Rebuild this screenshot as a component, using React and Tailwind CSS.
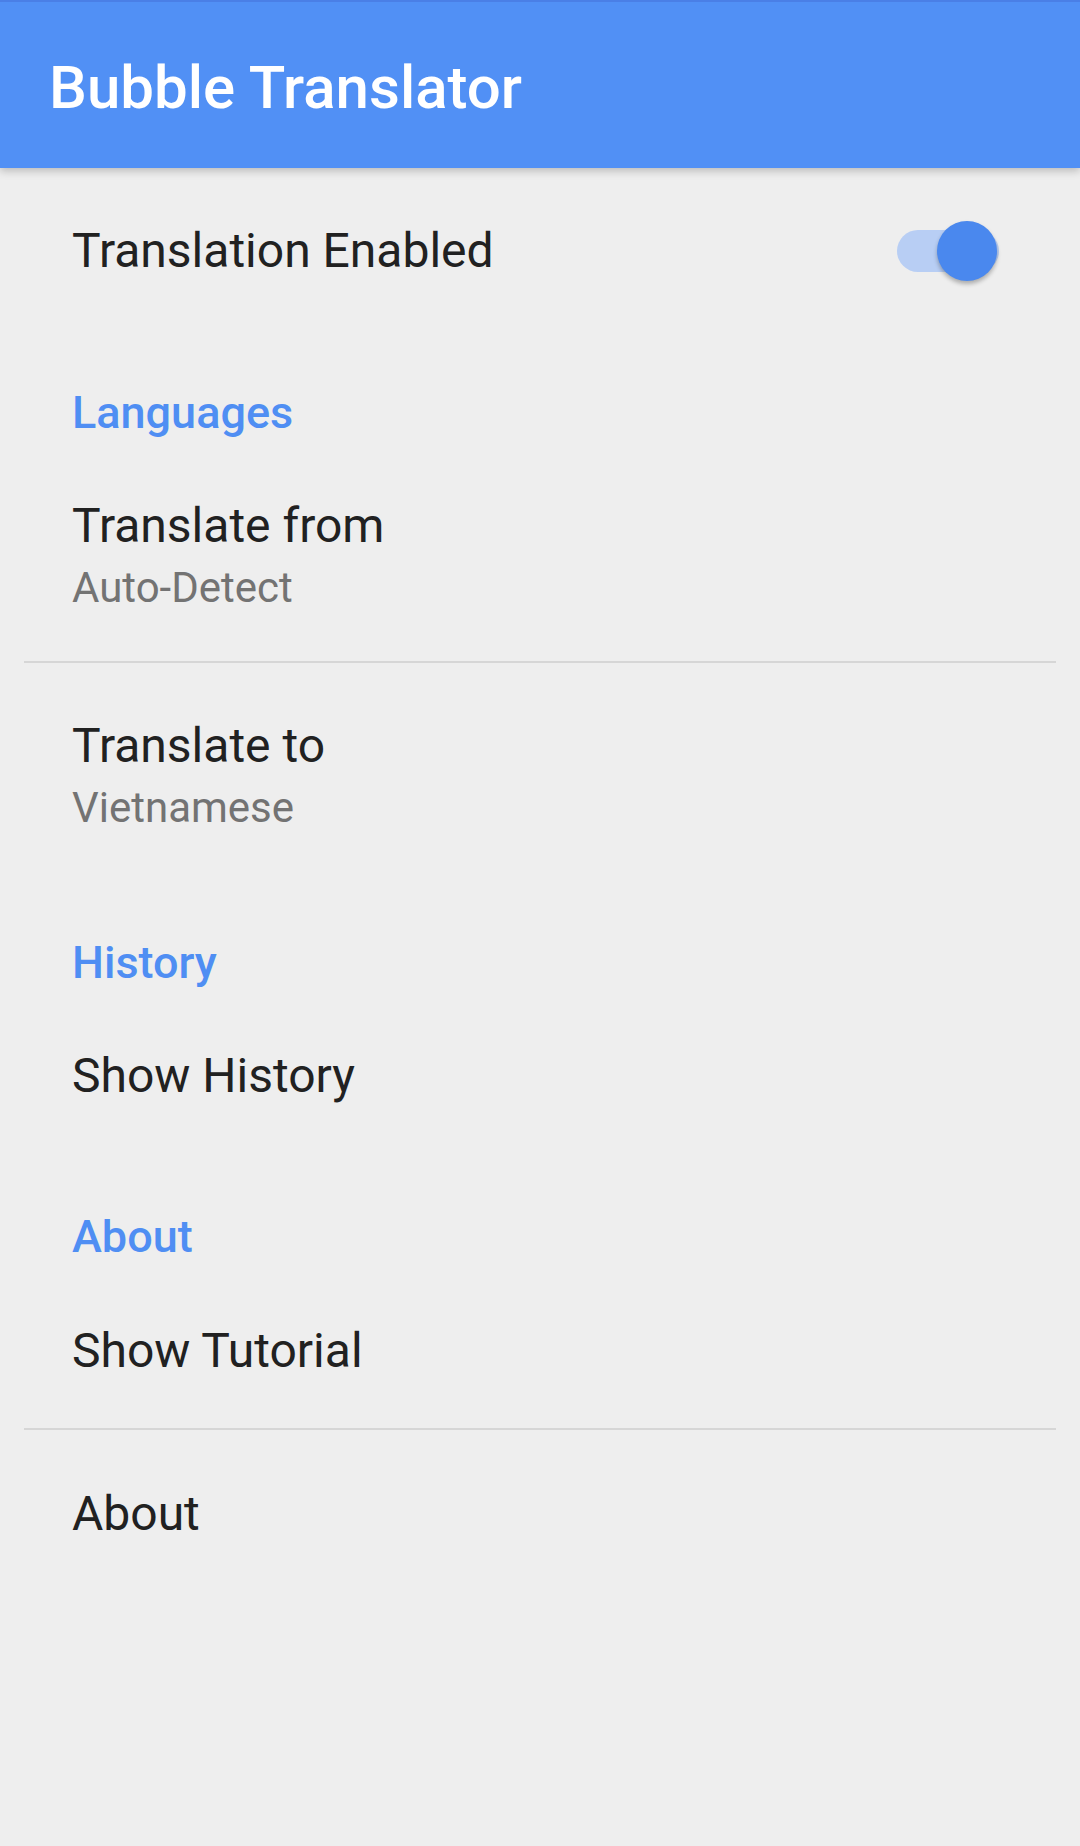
import React from 'react';

const Category = ({ label, className }) => (
  <div className={`h-[60px] flex items-center px-[72px] text-[45px] font-medium text-[#4f8ef3] ${className}`}>
    {label}
  </div>
);

const Title = ({ label, className }) => (
  <div className={`h-[60px] flex items-center text-[48px] text-[#212121] ${className}`}>{label}</div>
);

const Summary = ({ label, className }) => (
  <div className={`h-[60px] flex items-center text-[42px] text-[#737373] ${className}`}>{label}</div>
);

const Divider = ({ className }) => <div className={`mx-[24px] h-[2px] bg-[#d6d6d6] ${className}`} />;

const Toggle = () => (
  <div className="relative w-[120px] h-[64px] flex items-center">
    <div className="absolute left-[16px] w-[102px] h-[42px] rounded-full bg-[#b8cef4]" />
    <div className="absolute right-[4px] w-[60px] h-[60px] rounded-full bg-[#4a88ee] shadow-[0_3px_4px_rgba(0,0,0,0.28)]" />
  </div>
);

export default function App() {
  return (
    <div className="min-h-[1846px] bg-[#eeeeee] font-['Roboto',sans-serif]">
      <header className="relative z-10 h-[168px] pt-[5px] flex items-center px-[49px] bg-[#5190f5] border-t-[2px] border-[#4a7fe6] shadow-[0_3px_8px_rgba(0,0,0,0.22)]">
        <h1 className="text-[60px] font-medium text-white leading-none">Bubble Translator</h1>
      </header>

      <div className="mt-[53px] h-[60px] flex items-center justify-between pl-[72px] pr-[79px]">
        <div className="text-[48px] text-[#212121]">Translation Enabled</div>
        <Toggle />
      </div>

      <Category label="Languages" className="mt-[102px]" />
      <div className="px-[72px]">
        <Title label="Translate from" className="mt-[53px]" />
        <Summary label="Auto-Detect" className="mt-[1px]" />
      </div>
      <Divider className="mt-[44px]" />
      <div className="px-[72px]">
        <Title label="Translate to" className="mt-[53px]" />
        <Summary label="Vietnamese" className="mt-[1px]" />
      </div>

      <Category label="History" className="mt-[96px]" />
      <div className="px-[72px]">
        <Title label="Show History" className="mt-[53px]" />
      </div>

      <Category label="About" className="mt-[101px]" />
      <div className="px-[72px]">
        <Title label="Show Tutorial" className="mt-[54px]" />
      </div>
      <Divider className="mt-[47px]" />
      <div className="px-[72px]">
        <Title label="About" className="mt-[54px]" />
      </div>
    </div>
  );
}
